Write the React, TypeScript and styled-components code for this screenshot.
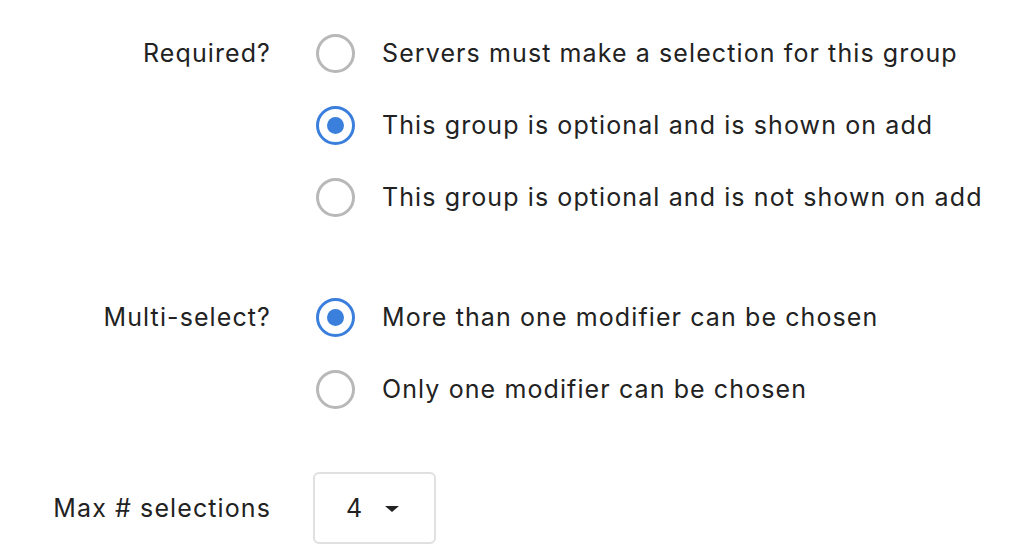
import React from "react";
import styled, { createGlobalStyle } from "styled-components";

const Global = createGlobalStyle`
  html, body { margin: 0; padding: 0; background: #fff; }
  body { font-family: Inter, "Noto Sans", sans-serif; color: #222; }
`;

const Page = styled.div`
  padding: 17px 0 0 0;
  display: flex;
  flex-direction: column;
  gap: 48px;
`;

const Group = styled.div<{ $tight?: boolean }>`
  display: grid;
  grid-template-columns: 271px auto;
  column-gap: 45px;
  align-items: start;
  margin-top: ${(p) => (p.$tight ? "-1px" : "0")};
`;

const Label = styled.div`
  height: 72px;
  display: flex;
  align-items: center;
  justify-content: flex-end;
  font-size: 25px;
  letter-spacing: 1.1px;
`;

const Options = styled.div`
  display: flex;
  flex-direction: column;
`;

const Option = styled.label`
  height: 72px;
  display: flex;
  align-items: center;
  gap: 27px;
  font-size: 25px;
  letter-spacing: 1.1px;
  cursor: pointer;
`;

const Radio = styled.span<{ $checked?: boolean }>`
  box-sizing: border-box;
  width: 39px;
  height: 39px;
  border-radius: 50%;
  border: 3px solid ${(p) => (p.$checked ? "#3b7fdc" : "#b8b8b8")};
  display: flex;
  align-items: center;
  justify-content: center;
  flex: none;
  &::after {
    content: "";
    display: ${(p) => (p.$checked ? "block" : "none")};
    width: 17px;
    height: 17px;
    border-radius: 50%;
    background: #3b7fdc;
  }
`;

const Select = styled.div`
  box-sizing: border-box;
  margin-left: -3px;
  width: 123px;
  height: 72px;
  border: 2px solid #e0e0e2;
  border-radius: 6px;
  display: flex;
  align-items: center;
  padding-left: 31px;
  gap: 23px;
  font-size: 25px;
`;

const Caret = styled.span`
  width: 0;
  height: 0;
  border-left: 7px solid transparent;
  border-right: 7px solid transparent;
  border-top: 6px solid #222;
  margin-top: 1px;
`;

const groups = [
  {
    label: "Required?",
    options: [
      { text: "Servers must make a selection for this group", checked: false },
      { text: "This group is optional and is shown on add", checked: true },
      { text: "This group is optional and is not shown on add", checked: false },
    ],
  },
  {
    label: "Multi-select?",
    options: [
      { text: "More than one modifier can be chosen", checked: true },
      { text: "Only one modifier can be chosen", checked: false },
    ],
  },
];

export default function App() {
  return (
    <>
      <Global />
      <Page>
        {groups.map((g) => (
          <Group key={g.label}>
            <Label>{g.label}</Label>
            <Options>
              {g.options.map((o) => (
                <Option key={o.text}>
                  <Radio $checked={o.checked} />
                  {o.text}
                </Option>
              ))}
            </Options>
          </Group>
        ))}
        <Group $tight>
          <Label>Max # selections</Label>
          <Select>
            4
            <Caret />
          </Select>
        </Group>
      </Page>
    </>
  );
}
